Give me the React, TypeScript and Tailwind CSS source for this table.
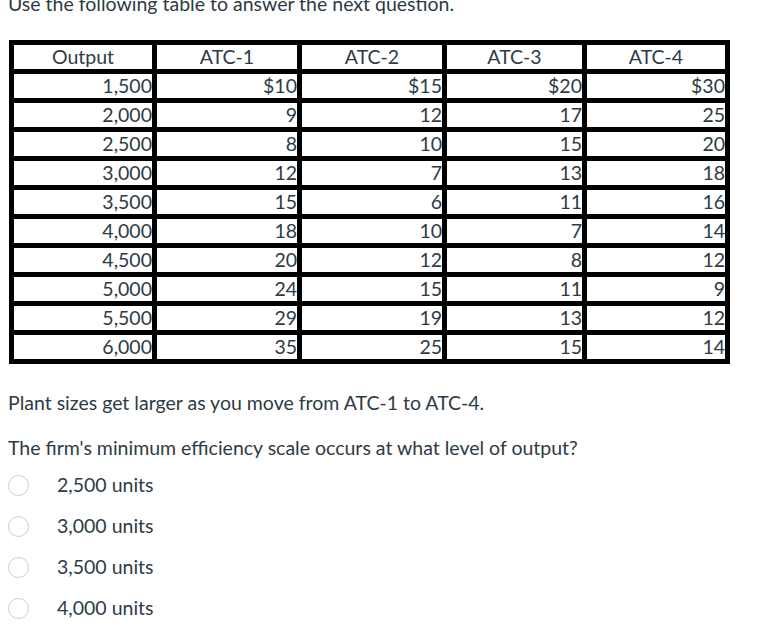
const HEADERS = ['Output', 'ATC-1', 'ATC-2', 'ATC-3', 'ATC-4'];

const ROWS = [
  ['1,500', '$10', '$15', '$20', '$30'],
  ['2,000', '9', '12', '17', '25'],
  ['2,500', '8', '10', '15', '20'],
  ['3,000', '12', '7', '13', '18'],
  ['3,500', '15', '6', '11', '16'],
  ['4,000', '18', '10', '7', '14'],
  ['4,500', '20', '12', '8', '12'],
  ['5,000', '24', '15', '11', '9'],
  ['5,500', '29', '19', '13', '12'],
  ['6,000', '35', '25', '15', '14'],
];

const OPTIONS = ['2,500 units', '3,000 units', '3,500 units', '4,000 units'];

export default function App() {
  return (
    <div
      className="h-[636px] w-[766px] overflow-hidden bg-white pl-2 text-[#2d3b45]"
      style={{ fontFamily: 'Lato, "Open Sans", sans-serif' }}
    >
      <p className="-mt-[10px] text-[19.5px] leading-[28px]">
        Use the following table to answer the next question.
      </p>

      {/* Cost table */}
      <div className="ml-px mt-[22px] grid w-[721px] grid-cols-[138px_140px_140px_135px_138px] gap-[5px] bg-black p-[5px] text-[19.5px] leading-[24px]">
        {HEADERS.map((h) => (
          <div key={h} className="h-[24px] bg-white text-center">
            {h}
          </div>
        ))}
        {ROWS.map((row) =>
          row.map((cell, i) => (
            <div key={row[0] + i} className="h-[24px] bg-white text-right">
              {cell}
            </div>
          )),
        )}
      </div>

      <p className="mt-[25px] text-[19.5px] leading-[28px]">
        Plant sizes get larger as you move from ATC-1 to ATC-4.
      </p>
      <p className="mt-[17px] text-[19.5px] leading-[28px]">
        The firm&apos;s minimum efficiency scale occurs at what level of output?
      </p>

      {/* Answers */}
      <div className="mt-[9px] flex flex-col gap-[13px]">
        {OPTIONS.map((o) => (
          <label key={o} className="flex h-[28px] items-center text-[19.5px]">
            <span className="h-[21px] w-[21px] rounded-full border border-[#c7cdd1] bg-white" />
            <span className="ml-[28px]">{o}</span>
          </label>
        ))}
      </div>
    </div>
  );
}
